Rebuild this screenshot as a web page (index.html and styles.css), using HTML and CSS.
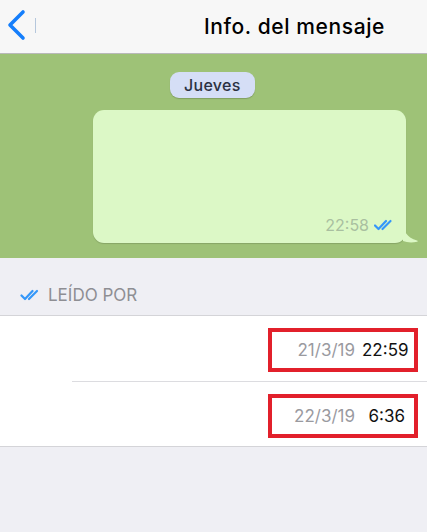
FILE: index.html
```html
<!DOCTYPE html>
<html lang="es">
<head>
    <meta charset="UTF-8">
    <meta name="viewport" content="width=device-width, initial-scale=1.0">
    <title>Info. del mensaje</title>
    <link rel="stylesheet" href="styles.css">
</head>
<body>

    <!-- Top navigation bar -->
    <header class="nav">
        <a class="back" href="#">
            <svg width="20" height="32" viewBox="0 0 20 32">
                <polyline points="17,3 4,16 17,29" fill="none" stroke="#157efb" stroke-width="3.6" stroke-linecap="round" stroke-linejoin="round"/>
            </svg>
        </a>
        <span class="back-divider"></span>
        <h1 class="nav-title">Info. del mensaje</h1>
    </header>

    <!-- Conversation preview -->
    <section class="chat">
        <div class="day-pill">Jueves</div>
        <div class="bubble">
            <div class="bubble-meta">
                <span class="bubble-time">22:58</span>
                <svg class="ticks" width="21" height="12" viewBox="0 0 21 12">
                    <polyline points="1,6.5 4.5,10 12,2" fill="none" stroke="#3497f9" stroke-width="2.2" stroke-linecap="round" stroke-linejoin="round"/>
                    <polyline points="8.5,10 16.5,2" fill="none" stroke="#3497f9" stroke-width="2.2" stroke-linecap="round"/>
                </svg>
            </div>
            <svg class="bubble-tail" width="16" height="22" viewBox="0 0 16 22">
                <path d="M0,0 C0,10 4,17 14,19.5 C15,19.8 15,20.6 14,20.8 C9,21.8 4,21.6 0,20 Z" fill="#dcf8c6"/>
            </svg>
        </div>
    </section>

    <!-- Read receipts -->
    <div class="section-head">
        <svg width="22" height="12" viewBox="0 0 21 12">
            <polyline points="1,6.5 4.5,10 12,2" fill="none" stroke="#3497f9" stroke-width="2.2" stroke-linecap="round" stroke-linejoin="round"/>
            <polyline points="8.5,10 16.5,2" fill="none" stroke="#3497f9" stroke-width="2.2" stroke-linecap="round"/>
        </svg>
        <span>LEÍDO POR</span>
    </div>

    <ul class="receipts">
        <li class="receipt">
            <div class="stamp">
                <span class="stamp-date">21/3/19</span>
                <span class="stamp-time">22:59</span>
            </div>
        </li>
        <li class="receipt">
            <div class="stamp">
                <span class="stamp-date">22/3/19</span>
                <span class="stamp-time">6:36</span>
            </div>
        </li>
    </ul>

</body>
</html>
```

FILE: styles.css
```css
body {
    margin: 0;
    font-family: Inter, "Liberation Sans", Arial, sans-serif;
    background-color: #efeff4;
    color: #000;
}

/* navigation bar */
.nav {
    height: 53px;
    display: flex;
    align-items: center;
    background-color: #f7f7f7;
    border-bottom: 1px solid #b9b9b9;
    box-sizing: content-box;
}
.back {
    display: flex;
    margin-left: 6px;
    margin-top: -4px;
}
.back-divider {
    width: 1px;
    height: 15px;
    margin-left: 9px;
    margin-top: -2px;
    background-color: #b5c7dc;
}
.nav-title {
    margin: 0 42px 0 auto;
    font-size: 21px;
    font-weight: 500;
    letter-spacing: 0.6px;
}

/* chat area */
.chat {
    height: 204px;
    background-color: #9ec277;
    display: flex;
    flex-direction: column;
    box-sizing: border-box;
    padding-top: 18px;
}
.day-pill {
    align-self: flex-start;
    margin-left: 170px;
    height: 26px;
    padding: 0 14px;
    line-height: 26px;
    border-radius: 9px;
    background-color: #d5def6;
    color: #2b3142;
    font-size: 16px;
    font-weight: 500;
    letter-spacing: 0.3px;
    box-shadow: 0 1px 1px rgba(0, 0, 0, 0.18);
}
.bubble {
    position: relative;
    margin: 12px 0 0 93px;
    width: 313px;
    height: 133px;
    border-radius: 11px;
    background-color: #dcf8c6;
    box-shadow: 0 1px 1px rgba(0, 0, 0, 0.15);
    display: flex;
    align-items: flex-end;
    justify-content: flex-end;
}
.bubble-meta {
    display: flex;
    align-items: center;
    gap: 5px;
    padding: 0 11px 8px 0;
}
.bubble-time {
    font-size: 16px;
    color: #a9bfa0;
}
.bubble-tail {
    position: absolute;
    right: -13px;
    bottom: 0;
}

/* read-by header */
.section-head {
    height: 57px;
    display: flex;
    align-items: flex-end;
    gap: 6px;
    padding: 0 0 10px 20px;
    box-sizing: border-box;
    color: #8e8e93;
    font-size: 17px;
}
.section-head svg {
    margin-bottom: 4px;
}

/* receipt rows */
.receipts {
    list-style: none;
    margin: 0;
    padding: 0;
    background-color: #fff;
    border-top: 1px solid #d4d4d8;
    border-bottom: 1px solid #d4d4d8;
}
.receipt {
    position: relative;
    height: 65px;
    display: flex;
    justify-content: flex-end;
    align-items: flex-start;
    padding: 12px 9px 0 0;
    box-sizing: border-box;
}
.receipt + .receipt {
    border-top: 1px solid #dcdce0;
    margin-left: 72px;
}
.stamp {
    width: 150px;
    height: 44px;
    box-sizing: border-box;
    border: 4px solid #e2202b;
    display: flex;
    align-items: center;
    justify-content: flex-end;
    gap: 7px;
    padding-right: 9px;
    font-size: 17px;
}
.stamp-date {
    color: #9a9a9f;
}
.stamp-time {
    width: 43px;
    text-align: right;
    color: #111;
}
```
